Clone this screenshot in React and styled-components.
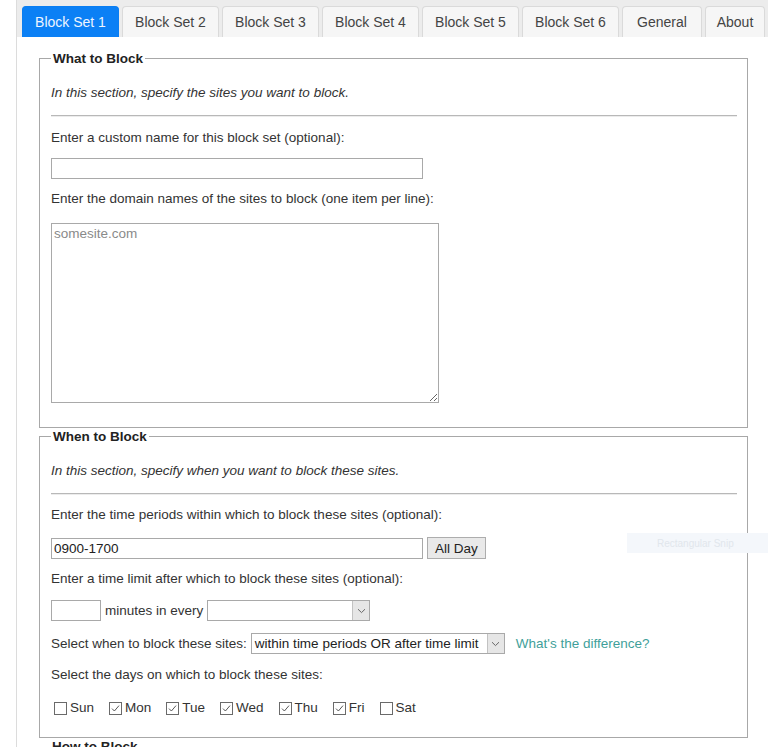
import React from "react";
import styled, { createGlobalStyle } from "styled-components";

const GlobalStyle = createGlobalStyle`
  html, body {
    margin: 0;
    padding: 0;
    background: #fff;
  }
  body {
    font-family: "Liberation Sans", Arial, sans-serif;
    font-size: 13.5px;
    color: #333;
  }
`;

const tabs = ["Block Set 1", "Block Set 2", "Block Set 3", "Block Set 4", "Block Set 5", "Block Set 6", "General", "About"];
const tabWidths = [97, 97, 97, 97, 97, 97, 80, 60];
const days = [
  { name: "Sun", on: false },
  { name: "Mon", on: true },
  { name: "Tue", on: true },
  { name: "Wed", on: true },
  { name: "Thu", on: true },
  { name: "Fri", on: true },
  { name: "Sat", on: false },
];

const Page = styled.div`
  position: relative;
  padding-left: 16px;
  height: 747px;
  overflow: hidden;
`;

const Container = styled.div`
  border-left: 1px solid #dcdcdc;
  min-height: 100%;
`;

const TabBar = styled.div`
  display: flex;
  gap: 3px;
  padding: 6px 0 0 5px;
  background: #ececec;
`;

const Tab = styled.div`
  flex-shrink: 0;
  white-space: nowrap;
  height: 31px;
  width: ${(p) => p.$w}px;
  box-sizing: border-box;
  display: flex;
  align-items: center;
  justify-content: center;
  font-size: 14px;
  border: 1px solid ${(p) => (p.$active ? "#0a7ef2" : "#dadada")};
  border-bottom: none;
  border-radius: 4px 4px 0 0;
  background: ${(p) => (p.$active ? "#0b80f5" : "#f6f6f6")};
  color: ${(p) => (p.$active ? "#eef5ff" : "#444")};
`;

const Fieldset = styled.fieldset`
  margin: ${(p) => p.$top}px 20px 0 22px;
  padding: 19px 10px ${(p) => p.$bottom}px 11px;
  border: 1px solid #a8a8a8;
  min-width: 0;
`;

const Legend = styled.legend`
  font-weight: bold;
  padding: 0 2px;
  margin-left: 0;
  line-height: 15px;
  color: #222;
`;

const Intro = styled.p`
  margin: 0;
  line-height: 16px;
  font-style: italic;
`;

const Rule = styled.hr`
  margin: 14px 0 ${(p) => p.$after || 13}px;
  border: none;
  border-top: 1px solid #b8b8b8;
  border-bottom: 1px solid #ececec;
`;

const Label = styled.p`
  margin: ${(p) => p.$top || 0}px 0 0;
  line-height: 16px;
`;

const TextInput = styled.input`
  display: block;
  box-sizing: border-box;
  margin: 0;
  width: ${(p) => p.$w}px;
  height: 21px;
  padding: 1px 2px;
  border: 1px solid #a9a9a9;
  font-family: inherit;
  font-size: 13.5px;
  color: #222;
  background: #fff;
  outline: none;
`;

const TextArea = styled.textarea`
  display: block;
  box-sizing: border-box;
  margin: 16px 0 0;
  width: 388px;
  height: 180px;
  padding: 2px;
  border: 1px solid #a9a9a9;
  font-family: inherit;
  font-size: 13.5px;
  color: #222;
  resize: both;
  outline: none;
  &::placeholder {
    color: #8a8a8a;
  }
`;

const Row = styled.div`
  display: flex;
  align-items: center;
  gap: 4px;
  margin-top: ${(p) => p.$top || 0}px;
  line-height: 16px;
  white-space: nowrap;
`;

const Button = styled.button`
  height: 22px;
  padding: 0 7px;
  margin: 0;
  border: 1px solid #adadad;
  background: #e9e9e9;
  font-family: inherit;
  font-size: 13.5px;
  color: #222;
`;

const SelectBox = styled.div`
  box-sizing: border-box;
  display: flex;
  width: ${(p) => p.$w}px;
  height: 21px;
  border: 1px solid #a9a9a9;
  background: #fff;
`;

const SelectText = styled.div`
  flex: 1;
  padding: 0 3px;
  display: flex;
  align-items: center;
  white-space: nowrap;
  overflow: hidden;
  color: #222;
`;

const SelectArrow = styled.div`
  width: 16px;
  display: flex;
  align-items: center;
  justify-content: center;
  background: #e6e6e6;
  border-left: 1px solid #c2c2c2;
`;

const Link = styled.a`
  color: #3f9f9a;
  text-decoration: none;
  margin-left: 7px;
`;

const DayList = styled.div`
  display: flex;
  gap: 15px;
  margin-top: 17px;
  padding-left: 3px;
  line-height: 16px;
`;

const Day = styled.label`
  display: flex;
  align-items: center;
  gap: 3px;
  color: #333;
`;

const Box = styled.span`
  box-sizing: border-box;
  width: 13px;
  height: 13px;
  border: 1px solid #6a6a6a;
  background: #fff;
  display: flex;
  align-items: center;
  justify-content: center;
`;

const NextLegend = styled.div`
  margin: 1px 0 0 35px;
  font-weight: bold;
  line-height: 15px;
  color: #222;
`;

const SnipHint = styled.div`
  position: absolute;
  left: 627px;
  top: 533px;
  width: 141px;
  height: 20px;
  background: #f4f7fb;
  color: #e1e6ec;
  font-size: 10px;
  display: flex;
  align-items: center;
  padding-left: 30px;
  box-sizing: border-box;
`;

function Chevron() {
  return (
    <svg width="9" height="6" viewBox="0 0 9 6">
      <path d="M1 1.2 L4.5 4.6 L8 1.2" fill="none" stroke="#666" strokeWidth="1" />
    </svg>
  );
}

function Check() {
  return (
    <svg width="11" height="11" viewBox="0 0 11 11">
      <path d="M2 5.6 L4.4 8 L9 2.6" fill="none" stroke="#444" strokeWidth="0.9" />
    </svg>
  );
}

function Select({ width, value }) {
  return (
    <SelectBox $w={width}>
      <SelectText>{value}</SelectText>
      <SelectArrow>
        <Chevron />
      </SelectArrow>
    </SelectBox>
  );
}

export default function App() {
  return (
    <Page>
      <GlobalStyle />
      <Container>
        <TabBar>
          {tabs.map((t, i) => (
            <Tab key={t} $active={i === 0} $w={tabWidths[i]}>
              {t}
            </Tab>
          ))}
        </TabBar>

        <Fieldset $top={14} $bottom={24}>
          <Legend>What to Block</Legend>
          <Intro>In this section, specify the sites you want to block.</Intro>
          <Rule />
          <Label>Enter a custom name for this block set (optional):</Label>
          <Row $top={12}>
            <TextInput $w={372} />
          </Row>
          <Label $top={12}>Enter the domain names of the sites to block (one item per line):</Label>
          <TextArea placeholder="somesite.com" />
        </Fieldset>

        <Fieldset $top={1} $bottom={21}>
          <Legend>When to Block</Legend>
          <Intro>In this section, specify when you want to block these sites.</Intro>
          <Rule $after={12} />
          <Label>Enter the time periods within which to block these sites (optional):</Label>
          <Row $top={14}>
            <TextInput $w={372} defaultValue="0900-1700" />
            <Button>All Day</Button>
          </Row>
          <Label $top={12}>Enter a time limit after which to block these sites (optional):</Label>
          <Row $top={13}>
            <TextInput $w={50} />
            <span>minutes in every</span>
            <Select width={163} value="" />
          </Row>
          <Row $top={12}>
            <span>Select when to block these sites:</span>
            <Select width={254} value="within time periods OR after time limit" />
            <Link href="#">What's the difference?</Link>
          </Row>
          <Label $top={13}>Select the days on which to block these sites:</Label>
          <DayList>
            {days.map((d) => (
              <Day key={d.name}>
                <Box>{d.on && <Check />}</Box>
                {d.name}
              </Day>
            ))}
          </DayList>
        </Fieldset>

        <NextLegend>How to Block</NextLegend>
      </Container>
      <SnipHint>Rectangular Snip</SnipHint>
    </Page>
  );
}
